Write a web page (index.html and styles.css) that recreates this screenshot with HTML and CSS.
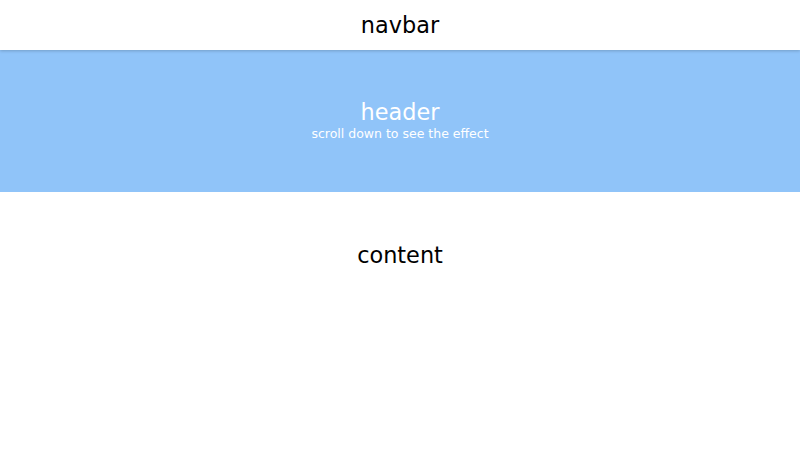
FILE: index.html
```html
<!DOCTYPE html>
<html lang="en">
<head>
  <meta charset="UTF-8">
  <meta name="viewport" content="width=device-width, initial-scale=1.0">
  <title>navbar</title>
  <link rel="stylesheet" href="styles.css">
</head>
<body>

  <!-- Top bar -->
  <nav class="navbar">navbar</nav>

  <!-- Header banner -->
  <header class="header">
    <h1>header</h1>
    <p>scroll down to see the effect</p>
  </header>

  <!-- Page content -->
  <main class="content">
    <h2>content</h2>
  </main>

</body>
</html>
```

FILE: styles.css
```css
/* Base */
body {
  margin: 0;
  padding: 0;
  font-family: 'DejaVu Sans', sans-serif;
  color: black;
  background-color: white;
}

/* Top bar */
.navbar {
  position: relative;
  z-index: 10;
  height: 50px;
  line-height: 50px;
  text-align: center;
  font-size: 22.4px;
  background-color: white;
  box-shadow: 0 1px 3px rgba(0, 0, 0, 0.2);
}

/* Header banner */
.header {
  height: 142px;
  box-sizing: border-box;
  padding-top: 48px;
  text-align: center;
  color: white;
  background-color: #90c4f9;
}

.header h1 {
  margin: 0;
  font-size: 22.4px;
  font-weight: normal;
  line-height: 28px;
}

.header p {
  margin: 0;
  font-size: 12.5px;
  line-height: 16px;
}

/* Page content */
.content {
  text-align: center;
  padding-top: 49px;
}

.content h2 {
  margin: 0;
  font-size: 22.4px;
  font-weight: normal;
  line-height: 28px;
}
```
